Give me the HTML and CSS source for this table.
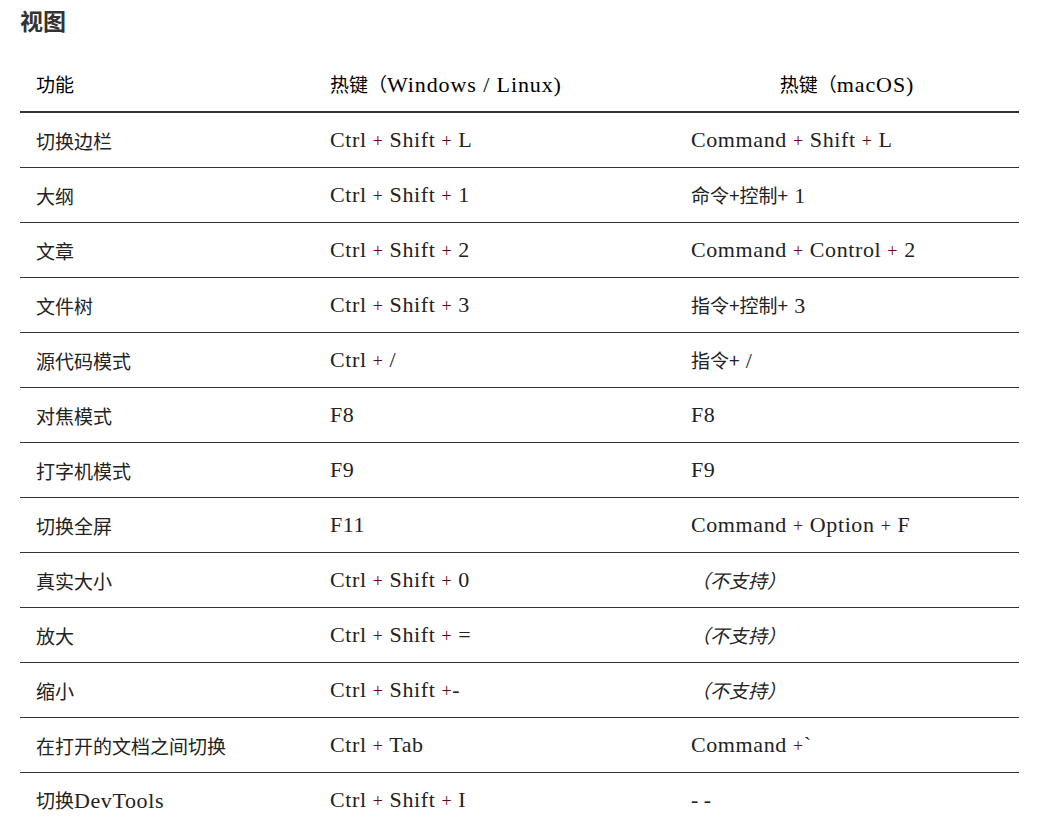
FILE: index.html
```html
<!DOCTYPE html>
<html lang="zh">
<head>
<meta charset="utf-8">
<link rel="stylesheet" href="styles.css">
</head>
<body>
<div class="page">
  <h2 class="title">视图</h2>
  <table class="keys">
    <colgroup><col class="c1"><col class="c2"><col class="c3"></colgroup>
    <thead>
      <tr><th><span class="zh">功能</span></th><th><span class="zh">热键（</span>Windows / Linux)</th><th class="center"><span class="zh">热键（</span>macOS)</th></tr>
    </thead>
    <tbody>
      <tr><td class="zh">切换边栏</td><td>Ctrl <span class="p">+</span> Shift <span class="p">+</span> L</td><td>Command <span class="p">+</span> Shift <span class="p">+</span> L</td></tr>
      <tr><td class="zh">大纲</td><td>Ctrl <span class="p">+</span> Shift <span class="p">+</span> 1</td><td><span class="zh">命令+控制+</span> 1</td></tr>
      <tr><td class="zh">文章</td><td>Ctrl <span class="p">+</span> Shift <span class="p">+</span> 2</td><td>Command <span class="p">+</span> Control <span class="p">+</span> 2</td></tr>
      <tr><td class="zh">文件树</td><td>Ctrl <span class="p">+</span> Shift <span class="p">+</span> 3</td><td><span class="zh">指令+控制+</span> 3</td></tr>
      <tr><td class="zh">源代码模式</td><td>Ctrl <span class="p">+</span> /</td><td><span class="zh">指令+</span> /</td></tr>
      <tr><td class="zh">对焦模式</td><td>F8</td><td>F8</td></tr>
      <tr><td class="zh">打字机模式</td><td>F9</td><td>F9</td></tr>
      <tr><td class="zh">切换全屏</td><td>F11</td><td>Command <span class="p">+</span> Option <span class="p">+</span> F</td></tr>
      <tr><td class="zh">真实大小</td><td>Ctrl <span class="p">+</span> Shift <span class="p">+</span> 0</td><td><em class="zh">（不支持）</em></td></tr>
      <tr><td class="zh">放大</td><td>Ctrl <span class="p">+</span> Shift <span class="p">+</span> =</td><td><em class="zh">（不支持）</em></td></tr>
      <tr><td class="zh">缩小</td><td>Ctrl <span class="p">+</span> Shift <span class="p">+</span>-</td><td><em class="zh">（不支持）</em></td></tr>
      <tr><td class="zh">在打开的文档之间切换</td><td>Ctrl <span class="p">+</span> Tab</td><td>Command <span class="p">+</span>`</td></tr>
      <tr><td><span class="zh">切换</span>DevTools</td><td>Ctrl <span class="p">+</span> Shift <span class="p">+</span> I</td><td class="dash">- -</td></tr>
    </tbody>
  </table>
</div>
</body>
</html>
```
FILE: styles.css
```css
html, body {
  margin: 0;
  padding: 0;
  background: #fff;
}
body {
  font-family: "Liberation Serif", "Noto Sans CJK SC", serif;
  color: #222;
}
.page {
  padding: 0 24px 0 20px;
}
.title {
  margin: 0;
  padding-top: 5px;
  font-family: "Noto Sans CJK SC", sans-serif;
  font-size: 23px;
  line-height: 30px;
  font-weight: 700;
  color: #333;
}
.keys {
  width: 999px;
  margin-top: 22px;
  border-collapse: collapse;
  table-layout: fixed;
  font-size: 22px;
  letter-spacing: 0.6px;
}
.c1 { width: 294px; }
.c2 { width: 361px; }
.c3 { width: 344px; }
.keys th {
  height: 54px;
  padding: 0 16px;
  text-align: left;
  font-weight: 400;
  color: #000;
  letter-spacing: 0.9px;
  border-bottom: 2px solid #333;
  vertical-align: middle;
  white-space: nowrap;
}
.keys th.center { text-align: center; }
.keys td {
  height: 54px;
  padding: 0 16px;
  border-bottom: 1px solid #333;
  vertical-align: middle;
  white-space: nowrap;
}
.keys tbody tr:last-child td { border-bottom: none; }
.zh {
  font-family: "Noto Sans CJK SC", sans-serif;
  font-size: 19px;
  font-weight: 400;
  letter-spacing: 0;
}
.p {
  color: #6b0016;
  font-size: 18px;
}
em.zh {
  font-style: italic;
}
.dash {
  letter-spacing: 0;
}
```
